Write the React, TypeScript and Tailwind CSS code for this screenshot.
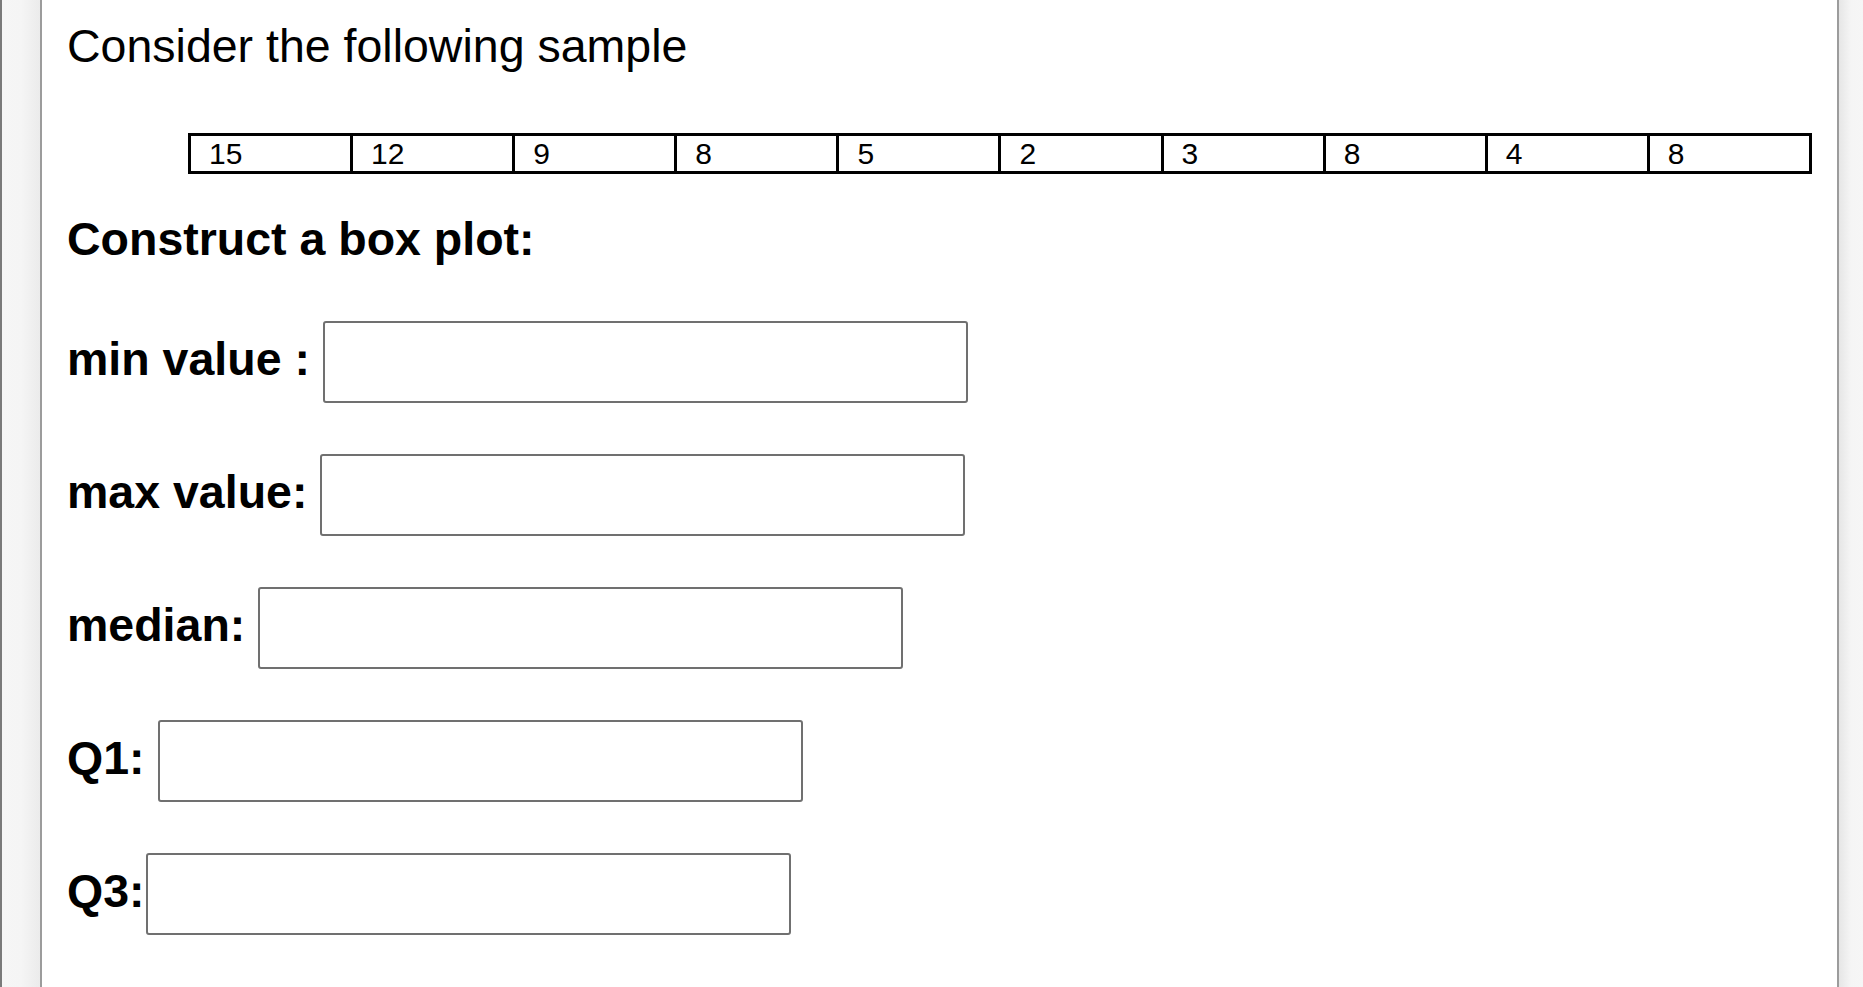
export default function App() {
  const values = [15, 12, 9, 8, 5, 2, 3, 8, 4, 8];
  const rows = [
    { label: "min value :", space: true },
    { label: "max value:", space: true },
    { label: "median:", space: true },
    { label: "Q1:", space: true },
    { label: "Q3:", space: false },
  ];
  return (
    <div className="flex h-[987px] w-full overflow-hidden bg-white font-['Liberation_Sans',Arial,sans-serif] text-black">
      <div className="w-[2px] shrink-0 bg-[#7a7a7a]" />
      <div className="w-[38px] shrink-0 bg-linear-to-r from-[#f6f6f6] via-[#f5f5f5] to-[#ebebeb]" />
      <div className="flex min-w-0 flex-1 flex-col border-x-2 border-[#9c9c9c] bg-white pl-[25px] pt-[20px]">
        <div className="text-[46.5px] leading-[53px]">Consider the following sample</div>
        <div className="ml-[121px] mt-[60px] flex h-[41px] w-[1624px] border-[3px] border-black">
          {values.map((v, i) => (
            <div
              key={i}
              className={
                i === 0
                  ? "flex flex-1 items-center pl-[18px] text-[30px] leading-none"
                  : "flex flex-1 items-center border-l-[3px] border-black pl-[18px] text-[30px] leading-none"
              }
            >
              {v}
            </div>
          ))}
        </div>
        <div className="mt-[39px] text-[46.5px] font-bold leading-[53px]">Construct a box plot:</div>
        <div className="mt-[55px] flex flex-col gap-[51px]">
          {rows.map((r) => (
            <div key={r.label} className="flex items-center">
              <span className="pb-[6px] text-[46.5px] font-bold leading-[53px] whitespace-pre">
                {r.label}
              </span>
              <input
                type="text"
                className={
                  r.space
                    ? "ml-[13px] h-[82px] w-[645px] rounded-[3px] border-2 border-[#707070] bg-white outline-none"
                    : "ml-[1px] h-[82px] w-[645px] rounded-[3px] border-2 border-[#707070] bg-white outline-none"
                }
              />
            </div>
          ))}
        </div>
      </div>
      <div className="w-[24px] shrink-0 bg-linear-to-r from-[#e6e6e6] via-[#f5f5f5] to-[#f6f6f6]" />
    </div>
  );
}
